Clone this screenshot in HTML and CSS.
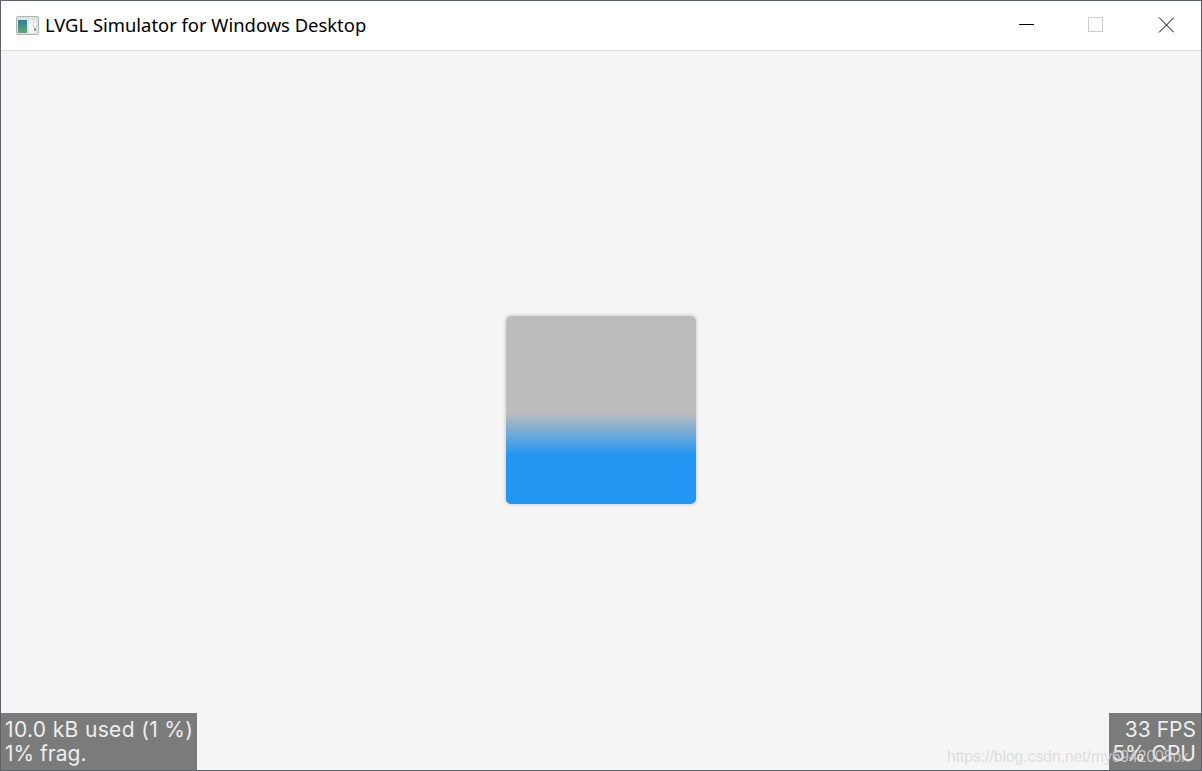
FILE: index.html
```html
<!DOCTYPE html>
<html lang="en">
<head>
  <meta charset="UTF-8">
  <meta name="viewport" content="width=device-width, initial-scale=1.0">
  <title>LVGL Simulator for Windows Desktop</title>
  <link rel="stylesheet" href="styles.css">
</head>
<body>
  <div class="window">
    <div class="titlebar">
      <svg class="app-icon" width="24" height="20" viewBox="0 0 24 20">
        <defs>
          <linearGradient id="pane" x1="0" y1="0" x2="0" y2="1">
            <stop offset="0" stop-color="#2f7f9c"/>
            <stop offset="1" stop-color="#5fa86f"/>
          </linearGradient>
        </defs>
        <rect x="0.5" y="0.5" width="22" height="18" rx="1" fill="#dfe2e3" stroke="#b0b4b6"/>
        <rect x="2" y="4" width="9" height="13" fill="url(#pane)"/>
        <rect x="13" y="4" width="7" height="13" fill="#f6f6f6"/>
        <rect x="17" y="4" width="1" height="8" fill="#d8d8d8"/>
        <rect x="18" y="12" width="2" height="3" fill="#7cae7c"/>
      </svg>
      <span class="title">LVGL Simulator for Windows Desktop</span>
      <div class="controls">
        <div class="control">
          <svg width="16" height="16" viewBox="0 0 16 16"><path d="M1 7.5H16" stroke="#000" fill="none"/></svg>
        </div>
        <div class="control">
          <svg width="16" height="16" viewBox="0 0 16 16"><rect x="0.5" y="0.5" width="14" height="14" stroke="#ccc" fill="none"/></svg>
        </div>
        <div class="control">
          <svg width="16" height="16" viewBox="0 0 16 16"><path d="M1 0.5L16 15.5M16 0.5L1 15.5" stroke="#000" fill="none"/></svg>
        </div>
      </div>
    </div>
    <div class="screen">
      <div class="bar"></div>
      <div class="monitor mem"><span class="wide">10.0 kB used (1 %)</span><br>1% frag.</div>
      <div class="monitor perf">33 FPS<br>5% CPU</div>
      <div class="watermark">https://blog.csdn.net/my6942008ok</div>
    </div>
  </div>
</body>
</html>
```

FILE: styles.css
```css
html, body {
  margin: 0;
  height: 100%;
}
body {
  width: 1202px;
  height: 771px;
  overflow: hidden;
  background-color: #f5f5f5;
}
.window {
  box-sizing: border-box;
  height: 771px;
  display: flex;
  flex-direction: column;
  border: 1px solid #5c6068;
}
.titlebar {
  flex: none;
  height: 49px;
  display: flex;
  align-items: center;
  background-color: white;
  border-bottom: 1px solid #dcdcdc;
}
.app-icon {
  margin-left: 15px;
  margin-right: 5px;
  margin-top: 1px;
}
.title {
  font-family: "Noto Sans", sans-serif;
  font-size: 18.4px;
  color: #000;
  padding-bottom: 2px;
}
.controls {
  margin-left: auto;
  align-self: flex-start;
  display: flex;
}
.control {
  width: 70px;
  height: 48px;
  display: flex;
  align-items: center;
  justify-content: center;
}
.screen {
  flex: 1;
  position: relative;
  display: flex;
  align-items: center;
  justify-content: center;
  background-color: #f5f5f5;
}
.bar {
  width: 190px;
  height: 188px;
  margin-bottom: 1px;
  border-radius: 5px;
  background: linear-gradient(#bcbcbc 0, #bcbcbc 97px, #2196f3 140px, #2196f3 100%);
  box-shadow: 0 0 2px 2px #e0e0e0;
}
.monitor {
  position: absolute;
  bottom: 0;
  height: 57px;
  box-sizing: border-box;
  padding-top: 5px;
  background-color: #7b7b7b;
  color: #eee;
  font-family: "Inter", sans-serif;
  font-size: 21px;
  line-height: 24px;
}
.mem {
  left: 0;
  width: 196px;
  padding-left: 4px;
  white-space: nowrap;
}
.wide {
  letter-spacing: 0.35px;
}
.perf {
  right: 0;
  width: 92px;
  padding-right: 5px;
  text-align: right;
}
.watermark {
  position: absolute;
  left: 946px;
  bottom: 4px;
  font-family: "Liberation Sans", sans-serif;
  font-size: 15.6px;
  color: rgba(215, 215, 215, 0.8);
  white-space: nowrap;
}
```
